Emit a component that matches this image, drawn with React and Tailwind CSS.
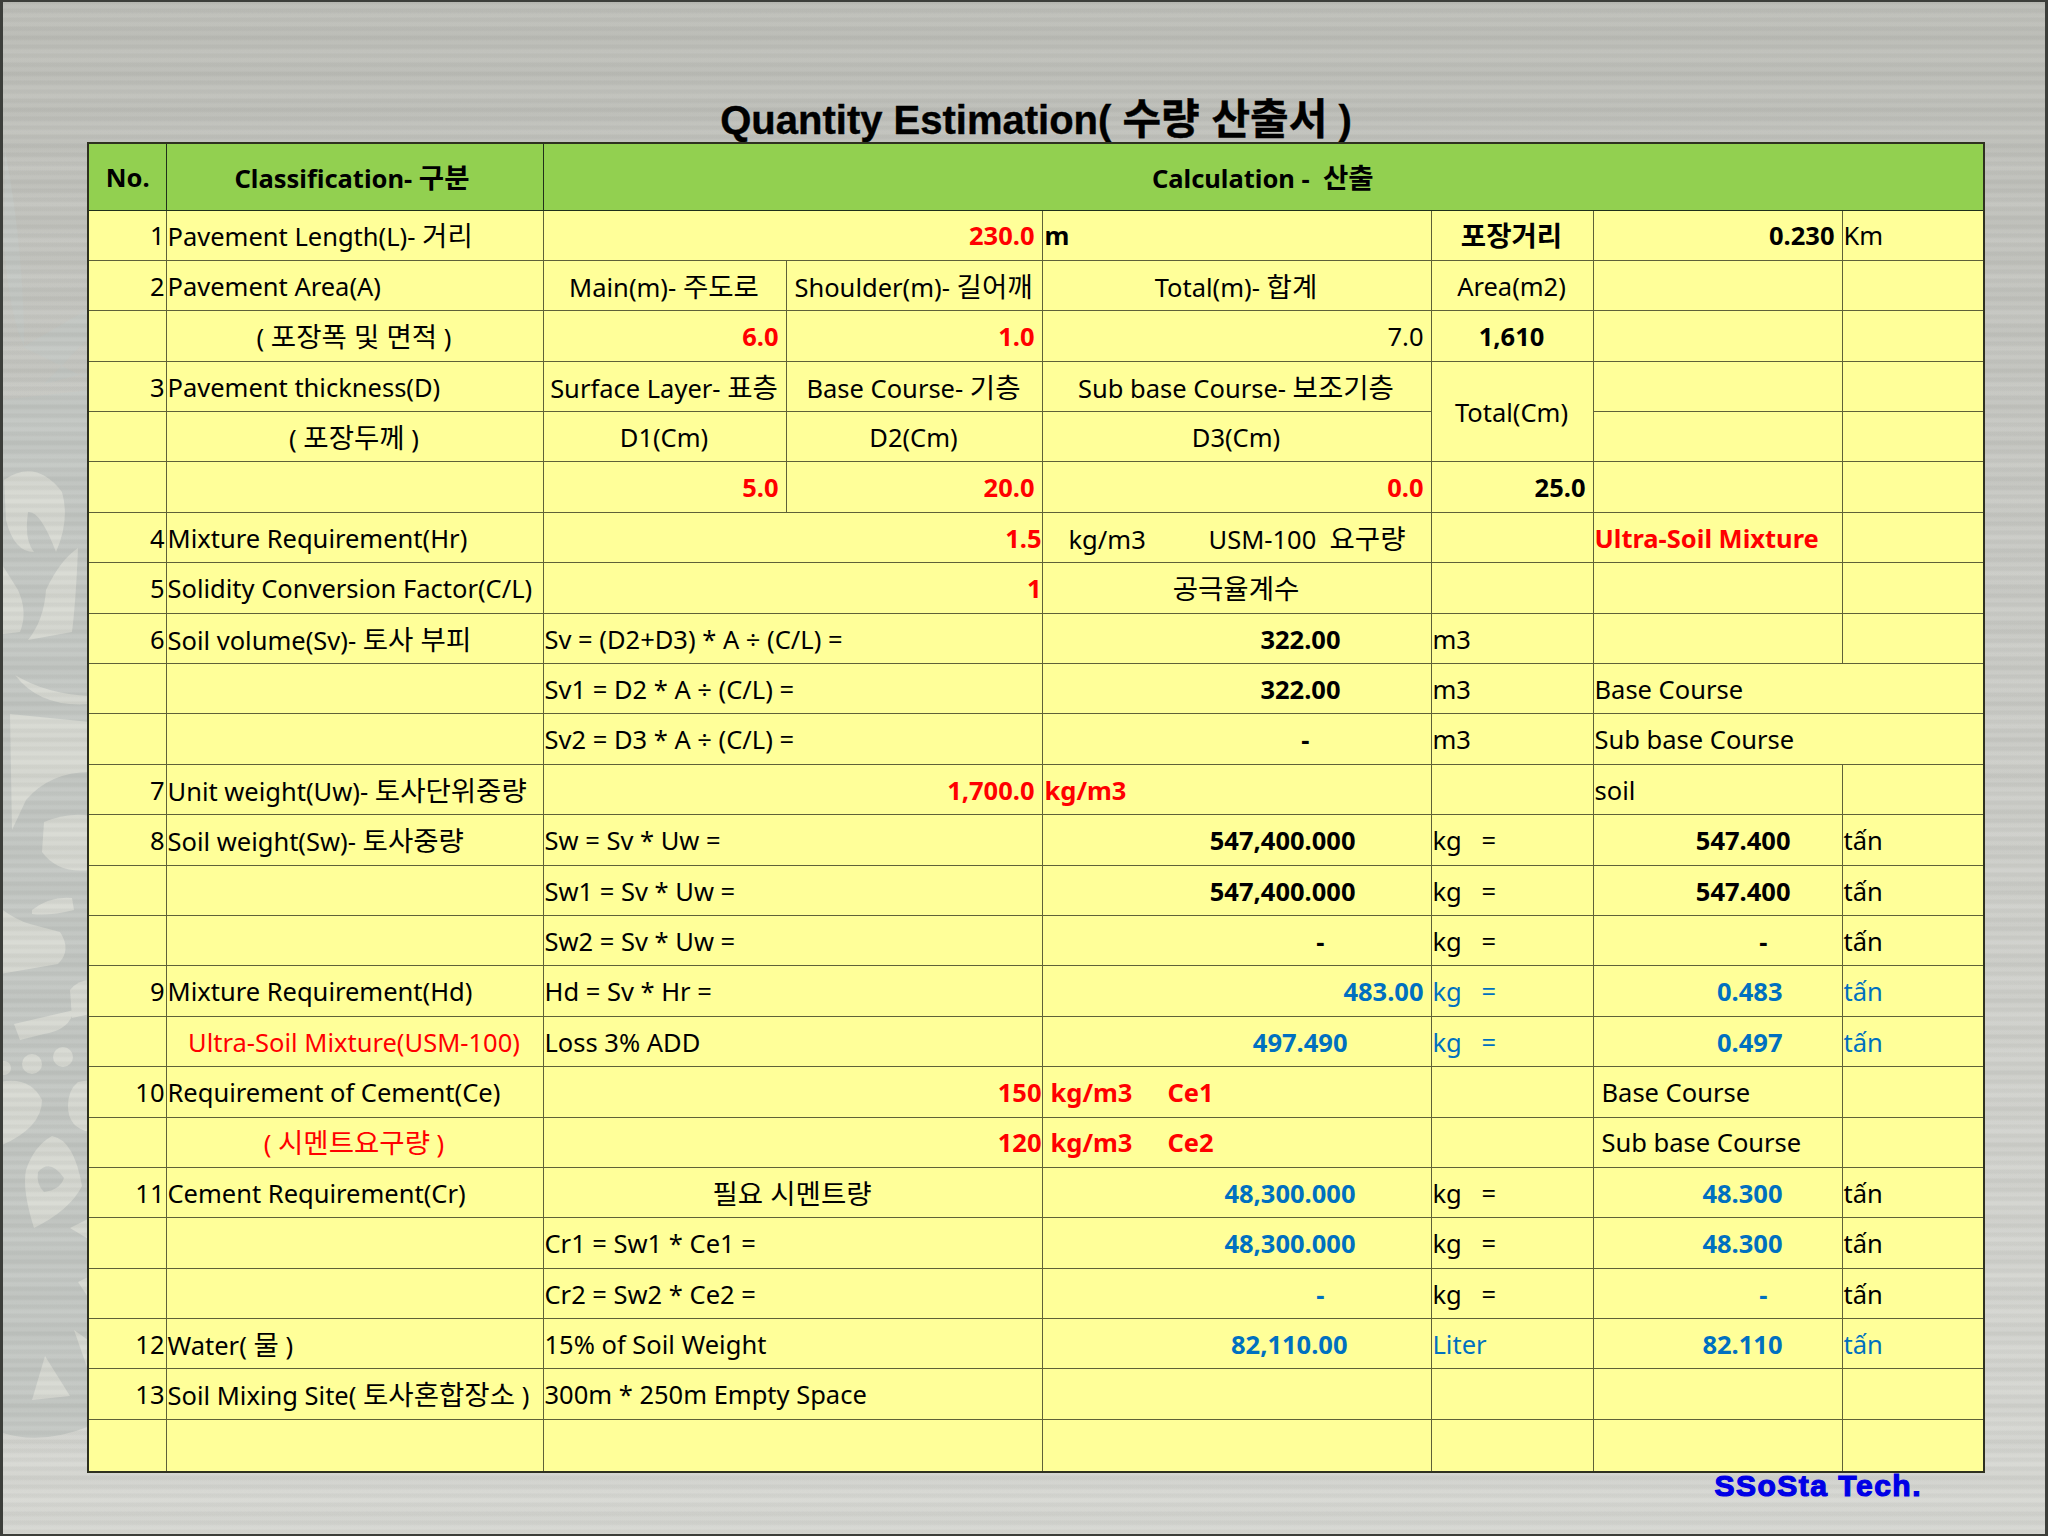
import React from "react";

const RED = "font-bold text-[#ff0000]";
const BLUE = "font-bold text-[#0070c0]";
const BOLD = "font-bold";

function hangul(node) {
  if (typeof node !== "string") return node;
  return node.split(/([\uac00-\ud7a3]+(?: [\uac00-\ud7a3]+)*)/).map((part, i) =>
    i % 2 === 1 ? (
      <span key={i} className="text-[1.08em]">
        {part}
      </span>
    ) : (
      part
    )
  );
}

function C({ span, rows, cls = "", children }) {
  return (
    <td colSpan={span} rowSpan={rows} className={"border border-[#5f6138] p-0 pt-[2px] pl-[1px] pr-[2px] text-left align-middle whitespace-pre overflow-visible " + cls}>
      {React.Children.map(children, hangul)}
    </td>
  );
}

function Row({ children, cls = "h-[50.4px]" }) {
  return <tr className={cls}>{children}</tr>;
}

function No({ children }) {
  return <C cls="!text-right !pr-[1px]">{children}</C>;
}

function KgEq({ cls = "" }) {
  return (
    <C cls={cls}>
      <span className="inline-block w-[49px]">kg</span>=
    </C>
  );
}

function Blank() {
  return <C></C>;
}

function Watermark() {
  return (
    <svg className="absolute left-0 top-0" width="90" height="1536" viewBox="0 0 90 1536">
      <g fill="#c3c7c3">
        <path d="M5 150 Q24 250 24 347 Q8 310 4 240 Z" />
        <path d="M23 347 L90 308 L90 336 L44 384 L90 372 L90 400 L0 430 L0 1400 Q50 1440 90 1420 L90 380 Z" />
        <path d="M0 400 L90 390 L90 1426 Q40 1446 0 1432 Z" />
      </g>
      <g fill="#d8dad3">
        <path d="M4 480 Q36 458 62 492 Q70 520 56 552 Q40 510 28 512 Q24 540 34 552 Q14 552 6 520 Z" />
        <path d="M78 548 Q76 600 72 632 L28 640 Q44 620 46 590 Q60 560 78 548 Z" />
        <path d="M3 566 L18 590 Q28 612 20 632 L3 634 Z" />
        <path d="M15 675 Q46 694 90 696 L90 704 Q40 708 15 675 Z" />
        <path d="M10 714 L90 722 L90 772 Q50 772 26 800 L12 830 Z" />
        <path d="M44 822 Q70 812 90 816 L90 870 Q58 874 42 852 Z" />
        <path d="M32 910 Q50 896 72 898 L74 910 Q50 916 32 914 Z" />
        <path d="M0 908 Q16 920 30 924 L60 932 Q72 950 58 964 L0 974 Z" />
        <path d="M70 990 Q78 980 90 980 L90 1014 L72 1018 Z" />
        <path d="M14 1024 Q40 1018 74 1010 Q70 1030 44 1034 L20 1040 Z" />
        <circle cx="32" cy="1064" r="10" />
        <circle cx="63" cy="1057" r="10" />
        <circle cx="4" cy="1068" r="7" />
        <path d="M0 1082 Q30 1076 42 1100 Q42 1128 0 1146 Z" />
        <path d="M78 1082 L90 1080 L90 1132 Q68 1128 68 1106 Q68 1090 78 1082 Z" />
        <path d="M52 1136 Q74 1140 82 1186 Q70 1210 34 1228 Q22 1190 26 1170 Q34 1146 52 1136 Z" />
        <path d="M70 1228 L90 1218 L90 1240 Z" />
        <path d="M78 1282 L90 1276 L90 1300 Z" />
        <path d="M74 1330 L88 1370 L88 1340 Z" />
        <path d="M45 1356 L70 1396 L32 1400 Z" />
      </g>
      <path d="M38 1172 Q50 1158 64 1178 Q60 1190 44 1192 Q36 1184 38 1172 Z" fill="#c3c7c3" />
    </svg>
  );
}

export default function App() {
  return (
    <div className="relative w-[2048px] h-[1536px] overflow-hidden bg-[linear-gradient(180deg,#bdbeb8_0%,#c9cac5_35%,#d8d9d4_100%)] font-['Noto_Sans','Noto_Sans_CJK_KR',sans-serif] text-black">
      <Watermark />
      <div className="absolute inset-0 bg-[repeating-linear-gradient(180deg,rgba(120,122,118,0.07)_0px,rgba(120,122,118,0.07)_3px,rgba(255,255,255,0.03)_5px,rgba(255,255,255,0.03)_8px,rgba(120,122,118,0.07)_9px),repeating-linear-gradient(180deg,rgba(120,122,118,0.06)_0px,rgba(255,255,255,0.03)_19px,rgba(120,122,118,0.06)_37px)]"></div>
      <div className="absolute inset-0 border-t-2 border-l-[3px] border-r-[3px] border-b-2 border-[#3c3e3a] pointer-events-none"></div>

      <div className="relative">
        <div className="h-[142px] flex items-end justify-center pl-[24px]">
          <h1 className="font-['Liberation_Sans','Noto_Sans_CJK_KR',sans-serif] font-bold text-[40px] leading-[46px] mb-[-1px] [-webkit-text-stroke:0.4px_black] whitespace-pre">
            Quantity Estimation( <span className="text-[1.05em]">수량 산출서</span> )
          </h1>
        </div>

        <table className="relative ml-[87px] w-[1896px] table-fixed border-collapse border-2 border-[#2f3120] bg-[#ffff99] text-[25.5px] leading-none">
          <colgroup>
            <col className="w-[78px]" />
            <col className="w-[377px]" />
            <col className="w-[243px]" />
            <col className="w-[256px]" />
            <col className="w-[389px]" />
            <col className="w-[162px]" />
            <col className="w-[249px]" />
            <col className="w-[142px]" />
          </colgroup>
          <tbody>
            <Row cls="h-[67px] bg-[#92d050] font-bold">
              <C cls="!text-center !border-[#20301a] !pl-[3px]">No.</C>
              <C cls="!text-center !border-[#20301a] !pr-[6px]">Classification- 구분</C>
              <C span={6} cls="!text-center !border-[#20301a]">Calculation -  산출</C>
            </Row>
            <Row>
              <No>1</No>
              <C>Pavement Length(L)- 거리</C>
              <C span={2} cls={"!text-right !pr-[7px] " + RED}>230.0</C>
              <C cls={"!pl-[2px] " + BOLD}>m</C>
              <C cls={"!text-center " + BOLD}>포장거리</C>
              <C cls={"!text-right !pr-[7px] " + BOLD}>0.230</C>
              <C>Km</C>
            </Row>
            <Row>
              <No>2</No>
              <C>Pavement Area(A)</C>
              <C cls="!text-center">Main(m)- 주도로</C>
              <C cls="!text-center">Shoulder(m)- 길어깨</C>
              <C cls="!text-center">Total(m)- 합계</C>
              <C cls="!text-center">Area(m2)</C>
              <Blank />
              <Blank />
            </Row>
            <Row>
              <Blank />
              <C cls="!text-center">( 포장폭 및 면적 )</C>
              <C cls={"!text-right !pr-[7px] " + RED}>6.0</C>
              <C cls={"!text-right !pr-[7px] " + RED}>1.0</C>
              <C cls="!text-right !pr-[7px]">7.0</C>
              <C cls={"!text-center " + BOLD}>1,610</C>
              <Blank />
              <Blank />
            </Row>
            <Row>
              <No>3</No>
              <C>Pavement thickness(D)</C>
              <C cls="!text-center">Surface Layer- 표층</C>
              <C cls="!text-center">Base Course- 기층</C>
              <C cls="!text-center">Sub base Course- 보조기층</C>
              <C rows={2} cls="!text-center">Total(Cm)</C>
              <Blank />
              <Blank />
            </Row>
            <Row>
              <Blank />
              <C cls="!text-center">( 포장두께 )</C>
              <C cls="!text-center">D1(Cm)</C>
              <C cls="!text-center">D2(Cm)</C>
              <C cls="!text-center">D3(Cm)</C>
              <Blank />
              <Blank />
            </Row>
            <Row>
              <Blank />
              <Blank />
              <C cls={"!text-right !pr-[7px] " + RED}>5.0</C>
              <C cls={"!text-right !pr-[7px] " + RED}>20.0</C>
              <C cls={"!text-right !pr-[7px] " + RED}>0.0</C>
              <C cls={"!text-right !pr-[7px] " + BOLD}>25.0</C>
              <Blank />
              <Blank />
            </Row>
            <Row>
              <No>4</No>
              <C>Mixture Requirement(Hr)</C>
              <C span={2} cls={"!text-right !pr-[0px] " + RED}>1.5</C>
              <C cls="!pl-[26px]">
                <span className="inline-block w-[140px]">kg/m3</span>
                USM-100  요구량
              </C>
              <Blank />
              <C cls={RED}>Ultra-Soil Mixture</C>
              <Blank />
            </Row>
            <Row>
              <No>5</No>
              <C>Solidity Conversion Factor(C/L)</C>
              <C span={2} cls={"!text-right !pr-[0px] " + RED}>1</C>
              <C cls="!text-center">공극율계수</C>
              <Blank />
              <Blank />
              <Blank />
            </Row>
            <Row>
              <No>6</No>
              <C>Soil volume(Sv)- 토사 부피</C>
              <C span={2}>Sv = (D2+D3) * A ÷ (C/L) =</C>
              <C cls={"!text-right !pr-[90px] " + BOLD}>322.00</C>
              <C>m3</C>
              <Blank />
              <Blank />
            </Row>
            <Row>
              <Blank />
              <Blank />
              <C span={2}>Sv1 = D2 * A ÷ (C/L) =</C>
              <C cls={"!text-right !pr-[90px] " + BOLD}>322.00</C>
              <C>m3</C>
              <C span={2}>Base Course</C>
            </Row>
            <Row>
              <Blank />
              <Blank />
              <C span={2}>Sv2 = D3 * A ÷ (C/L) =</C>
              <C cls={"!text-right !pr-[121px] " + BOLD}>-</C>
              <C>m3</C>
              <C span={2}>Sub base Course</C>
            </Row>
            <Row>
              <No>7</No>
              <C>Unit weight(Uw)- 토사단위중량</C>
              <C span={2} cls={"!text-right !pr-[7px] " + RED}>1,700.0</C>
              <C cls={"!pl-[2px] " + RED}>kg/m3</C>
              <Blank />
              <C>soil</C>
              <Blank />
            </Row>
            <Row>
              <No>8</No>
              <C>Soil weight(Sw)- 토사중량</C>
              <C span={2}>Sw = Sv * Uw =</C>
              <C cls={"!text-right !pr-[75px] " + BOLD}>547,400.000</C>
              <KgEq />
              <C cls={"!text-right !pr-[51px] " + BOLD}>547.400</C>
              <C>tấn</C>
            </Row>
            <Row>
              <Blank />
              <Blank />
              <C span={2}>Sw1 = Sv * Uw =</C>
              <C cls={"!text-right !pr-[75px] " + BOLD}>547,400.000</C>
              <KgEq />
              <C cls={"!text-right !pr-[51px] " + BOLD}>547.400</C>
              <C>tấn</C>
            </Row>
            <Row>
              <Blank />
              <Blank />
              <C span={2}>Sw2 = Sv * Uw =</C>
              <C cls={"!text-right !pr-[106px] " + BOLD}>-</C>
              <KgEq />
              <C cls={"!text-right !pr-[74px] " + BOLD}>-</C>
              <C>tấn</C>
            </Row>
            <Row>
              <No>9</No>
              <C>Mixture Requirement(Hd)</C>
              <C span={2}>Hd = Sv * Hr =</C>
              <C cls={"!text-right !pr-[7px] " + BLUE}>483.00</C>
              <KgEq cls="text-[#0070c0]" />
              <C cls={"!text-right !pr-[59px] " + BLUE}>0.483</C>
              <C cls="text-[#0070c0]">tấn</C>
            </Row>
            <Row>
              <Blank />
              <C cls="!text-center text-[#ff0000]">Ultra-Soil Mixture(USM-100)</C>
              <C span={2}>Loss 3% ADD</C>
              <C cls={"!text-right !pr-[83px] " + BLUE}>497.490</C>
              <KgEq cls="text-[#0070c0]" />
              <C cls={"!text-right !pr-[59px] " + BLUE}>0.497</C>
              <C cls="text-[#0070c0]">tấn</C>
            </Row>
            <Row>
              <No>10</No>
              <C>Requirement of Cement(Ce)</C>
              <C span={2} cls={"!text-right !pr-[0px] " + RED}>150</C>
              <C cls={"!pl-[8px] " + RED}>
                <span className="inline-block w-[117px]">kg/m3</span>
                Ce1
              </C>
              <Blank />
              <C cls="!pl-[8px]">Base Course</C>
              <Blank />
            </Row>
            <Row>
              <Blank />
              <C cls="!text-center text-[#ff0000]">( 시멘트요구량 )</C>
              <C span={2} cls={"!text-right !pr-[0px] " + RED}>120</C>
              <C cls={"!pl-[8px] " + RED}>
                <span className="inline-block w-[117px]">kg/m3</span>
                Ce2
              </C>
              <Blank />
              <C cls="!pl-[8px]">Sub base Course</C>
              <Blank />
            </Row>
            <Row>
              <No>11</No>
              <C>Cement Requirement(Cr)</C>
              <C span={2} cls="!text-center">필요 시멘트량</C>
              <C cls={"!text-right !pr-[75px] " + BLUE}>48,300.000</C>
              <KgEq />
              <C cls={"!text-right !pr-[59px] " + BLUE}>48.300</C>
              <C>tấn</C>
            </Row>
            <Row>
              <Blank />
              <Blank />
              <C span={2}>Cr1 = Sw1 * Ce1 =</C>
              <C cls={"!text-right !pr-[75px] " + BLUE}>48,300.000</C>
              <KgEq />
              <C cls={"!text-right !pr-[59px] " + BLUE}>48.300</C>
              <C>tấn</C>
            </Row>
            <Row>
              <Blank />
              <Blank />
              <C span={2}>Cr2 = Sw2 * Ce2 =</C>
              <C cls={"!text-right !pr-[106px] " + BLUE}>-</C>
              <KgEq />
              <C cls={"!text-right !pr-[74px] " + BLUE}>-</C>
              <C>tấn</C>
            </Row>
            <Row>
              <No>12</No>
              <C>Water( 물 )</C>
              <C span={2}>15% of Soil Weight</C>
              <C cls={"!text-right !pr-[83px] " + BLUE}>82,110.00</C>
              <C cls="text-[#0070c0]">Liter</C>
              <C cls={"!text-right !pr-[59px] " + BLUE}>82.110</C>
              <C cls="text-[#0070c0]">tấn</C>
            </Row>
            <Row>
              <No>13</No>
              <C>Soil Mixing Site( 토사혼합장소 )</C>
              <C span={2}>300m * 250m Empty Space</C>
              <Blank />
              <Blank />
              <Blank />
              <Blank />
            </Row>
            <Row cls="h-[53px]">
              <Blank />
              <Blank />
              <C span={2}></C>
              <Blank />
              <Blank />
              <Blank />
              <Blank />
            </Row>
          </tbody>
        </table>

        <div className="flex justify-end pr-[126px] mt-[-2px]">
          <span className="font-['Liberation_Sans',sans-serif] font-bold text-[30px] tracking-[1.5px] leading-[30px] text-[#0000e6] [-webkit-text-stroke:1.2px_#0000e6]">SSoSta Tech.</span>
        </div>
      </div>
    </div>
  );
}
